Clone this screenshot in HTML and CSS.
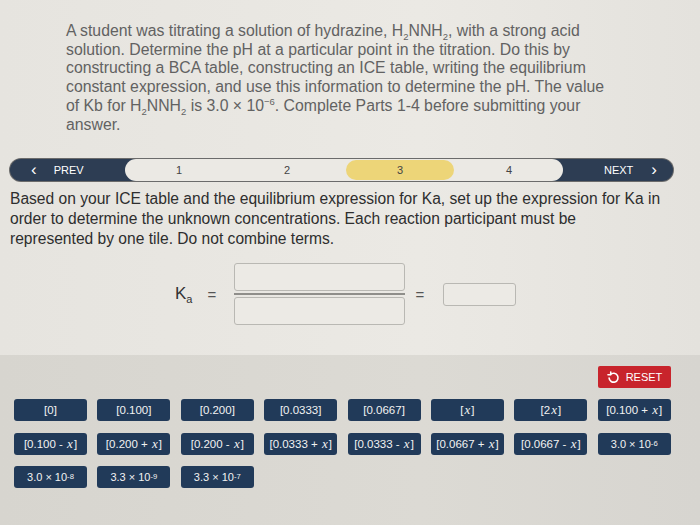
FILE: index.html
```html
<!DOCTYPE html>
<html lang="en">
<head>
  <meta charset="UTF-8" />
  <meta name="viewport" content="width=device-width, initial-scale=1.0"/>
  <title>Titration - Part 3</title>
  <link rel="stylesheet" href="styles.css">
</head>
<body>

  <div class="intro">
    A student was titrating a solution of hydrazine, H<sub>2</sub>NNH<sub>2</sub>, with a strong acid<br>
    solution. Determine the pH at a particular point in the titration. Do this by<br>
    constructing a BCA table, constructing an ICE table, writing the equilibrium<br>
    constant expression, and use this information to determine the pH. The value<br>
    of Kb for H<sub>2</sub>NNH<sub>2</sub> is 3.0 &times; 10<sup>&minus;6</sup>. Complete Parts 1-4 before submitting your<br>
    answer.
  </div>

  <div class="steps">
    <div class="prev"><span class="chev">&#x2039;</span> PREV</div>
    <div class="pages">
      <div class="page">1</div>
      <div class="page">2</div>
      <div class="page active">3</div>
      <div class="page">4</div>
    </div>
    <div class="next">NEXT <span class="chev">&#x203A;</span></div>
  </div>

  <p class="question">
    Based on your ICE table and the equilibrium expression for Ka, set up the expression for Ka in<br>
    order to determine the unknown concentrations. Each reaction participant must be<br>
    represented by one tile. Do not combine terms.
  </p>

  <div class="equation">
    <div class="ka">K<sub>a</sub></div>
    <div class="eq first">=</div>
    <div class="fraction">
      <div class="slot wide"></div>
      <div class="bar"></div>
      <div class="slot wide"></div>
    </div>
    <div class="eq second">=</div>
    <div class="slot small"></div>
  </div>

  <div class="tray">
    <div class="tray-top">
      <button class="reset">
        <svg width="13" height="13" viewBox="0 0 16 16" fill="none" stroke="#fff" stroke-width="2" stroke-linecap="round" stroke-linejoin="round">
          <path d="M4.2 4.3A5.5 5.5 0 1 1 2.6 8.8"/>
          <path d="M4.6 1.2v3.4H1.2"/>
        </svg>
        RESET
      </button>
    </div>
    <div class="tiles" id="tiles"></div>
  </div>

  <script>
    const tiles = [
      "[0]", "[0.100]", "[0.200]", "[0.0333]", "[0.0667]", "[<i>x</i>]", "[2<i>x</i>]", "[0.100 + <i>x</i>]",
      "[0.100 - <i>x</i>]", "[0.200 + <i>x</i>]", "[0.200 - <i>x</i>]", "[0.0333 + <i>x</i>]",
      "[0.0333 - <i>x</i>]", "[0.0667 + <i>x</i>]", "[0.0667 - <i>x</i>]", "3.0 &times; 10<sup>-6</sup>",
      "3.0 &times; 10<sup>-8</sup>", "3.3 &times; 10<sup>-9</sup>", "3.3 &times; 10<sup>-7</sup>"
    ];

    const tilesEl = document.getElementById("tiles");
    tiles.forEach(t => {
      const el = document.createElement("div");
      el.className = "tile";
      if (t.indexOf("<sup>") > -1) el.className += " num";
      el.innerHTML = t;
      tilesEl.appendChild(el);
    });
  </script>

</body>
</html>
```

FILE: styles.css
```css
* { box-sizing: border-box; margin: 0; padding: 0; }

body {
  font-family: 'Liberation Sans', Arial, sans-serif;
  background: linear-gradient(90deg, #e6e4df 0%, #ebe9e4 60%, #e4e2dd 100%);
  color: #333;
  width: 700px;
  height: 525px;
  overflow: hidden;
  display: flex;
  flex-direction: column;
}

sub, sup { font-size: 0.6em; line-height: 0; }

.intro {
  padding: 22px 0 0 66px;
  font-size: 15.8px;
  line-height: 18.7px;
  color: #626262;
  white-space: nowrap;
}

/* step bar */
.steps {
  display: flex;
  flex-shrink: 0;
  height: 22px;
  margin: 25px 27px 0 10px;
  background: #2d3d53;
  border-radius: 11px;
  font-size: 11px;
  color: #fff;
  box-shadow: 0 0 0 1px #6b6b6b;
}

.prev, .next {
  display: flex;
  align-items: center;
  gap: 17px;
}

.prev { width: 115px; padding-left: 21px; }
.next { width: 110px; justify-content: flex-end; padding-right: 16px; gap: 18px; }

.chev { font-size: 17px; line-height: 1; margin-top: -2px; }

.pages {
  flex: 1;
  display: flex;
  background: #ebe9e4;
  border-radius: 11px;
  color: #444;
  padding: 1px 0;
}

.page {
  flex: 1;
  display: flex;
  align-items: center;
  justify-content: center;
  border-radius: 10px;
}

.page.active {
  background: #edd578;
  margin: 0 1px 0 5px;
}

.question {
  margin: 8px 0 0 10px;
  font-size: 15.6px;
  line-height: 20px;
  color: #2e2e2e;
  white-space: nowrap;
}

/* Ka expression */
.equation {
  display: flex;
  align-items: center;
  margin: 14px 0 0 175px;
  color: #333;
}

.ka { font-size: 17px; width: 25px; }
.ka sub { font-size: 11px; }

.eq { font-size: 15px; color: #555; text-align: center; }
.eq.first { width: 24px; margin-right: 10px; }
.eq.second { width: 30px; margin-right: 8px; }

.fraction {
  display: flex;
  flex-direction: column;
  gap: 2px;
}

.slot {
  border: 1px solid #b9b8b3;
  border-radius: 3px;
  background: #eceae5;
}

.slot.wide { width: 171px; height: 28px; }
.slot.small { width: 73px; height: 23px; }

.fraction .bar { height: 2px; background: #8f8e8a; }

/* tile tray */
.tray {
  flex: 1;
  margin-top: 30px;
  background: linear-gradient(90deg, #d7d5cf 0%, #dcdad4 60%, #d7d5d0 100%);
  padding: 11px 29px 0 14px;
}

.tray-top {
  display: flex;
  justify-content: flex-end;
  margin-bottom: 11px;
}

.reset {
  display: flex;
  align-items: center;
  justify-content: center;
  gap: 6px;
  width: 73px;
  height: 22px;
  background: #c8242c;
  color: #fff;
  border: none;
  border-radius: 2px;
  font-family: inherit;
  font-size: 11px;
}

.tiles {
  display: grid;
  grid-template-columns: repeat(8, 73px);
  column-gap: 10.4px;
  row-gap: 11.5px;
}

.tile {
  height: 22px;
  background: #213a59;
  color: #f2f2f2;
  border-radius: 3px;
  font-size: 11.5px;
  display: flex;
  align-items: center;
  justify-content: center;
  white-space: pre;
}

.tile i { font-family: 'Liberation Serif', serif; font-size: 13px; margin: 0 1px; }
.tile.num { font-size: 11px; }
.tile sup { font-size: 0.7em; vertical-align: 0.5em; }
```
